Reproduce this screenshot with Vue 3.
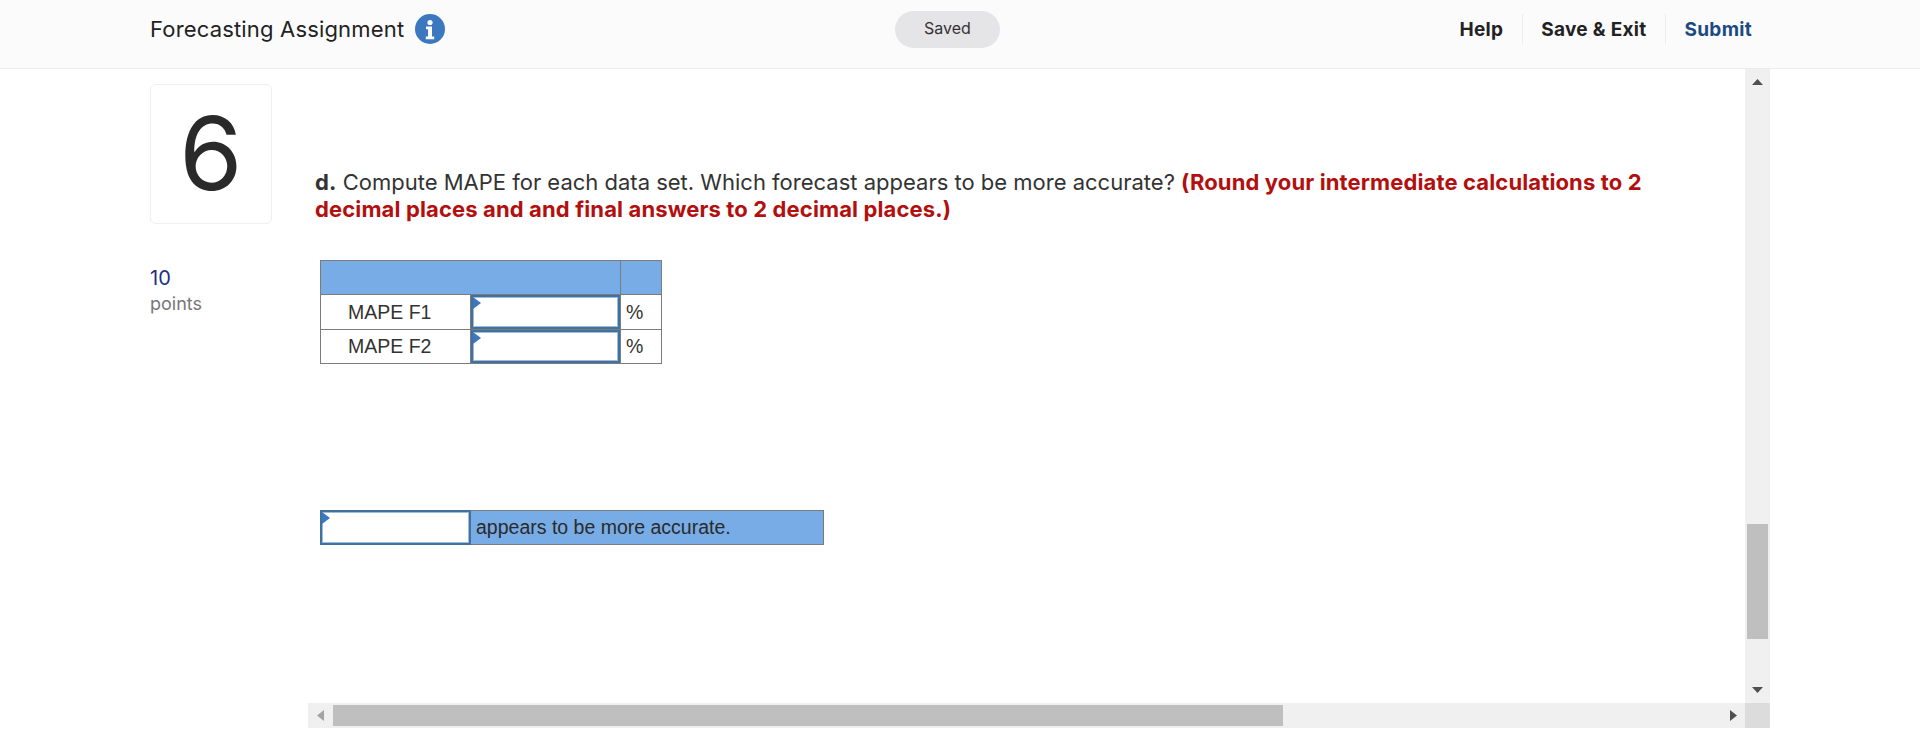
<template>
  <div class="page">
    <header class="top-bar">
      <div class="title-wrap">
        <h1 class="title">Forecasting Assignment</h1>
        <svg class="info-icon" width="30" height="30" viewBox="0 0 30 30">
          <circle cx="15" cy="15" r="15" fill="#3b78c0" />
          <circle cx="15" cy="8.5" r="2.6" fill="#fff" />
          <path d="M11 12.5h6v10h2.2v2.8h-8.4v-2.8H13v-7.2h-2z" fill="#fff" />
        </svg>
      </div>
      <span class="saved">Saved</span>
      <nav class="actions">
        <a class="action">Help</a>
        <a class="action">Save &amp; Exit</a>
        <a class="action submit">Submit</a>
      </nav>
    </header>

    <main class="main">
      <aside class="side">
        <div class="num-card">6</div>
        <div class="points-val">10</div>
        <div class="points-label">points</div>
      </aside>

      <section class="pane">
        <div class="content">
          <p class="question">
            <b>d.</b> Compute MAPE for each data set. Which forecast appears to be more accurate?
            <b class="hint">(Round your intermediate calculations to 2 decimal places and and final answers to 2 decimal places.)</b>
          </p>

          <table class="grid-table">
            <tbody>
              <tr class="head-row">
                <td colspan="2"></td>
                <td class="unit-col"></td>
              </tr>
              <tr v-for="row in rows" :key="row">
                <td class="label-col">{{ row }}</td>
                <td class="input-col"><div class="answer"></div></td>
                <td class="unit-col">%</td>
              </tr>
            </tbody>
          </table>

          <div class="accurate">
            <div class="answer accurate-input"></div>
            <div class="accurate-text">appears to be more accurate.</div>
          </div>
        </div>

        <div class="v-scroll">
          <svg class="arrow-up" width="11" height="6" viewBox="0 0 11 6"><path d="M5.5 0l5.5 6H0z" fill="#505050" /></svg>
          <div class="v-thumb"></div>
          <svg class="arrow-down" width="11" height="6" viewBox="0 0 11 6"><path d="M0 0h11L5.5 6z" fill="#505050" /></svg>
        </div>
        <div class="h-scroll">
          <svg class="arrow-left" width="7" height="11" viewBox="0 0 7 11"><path d="M7 0v11L0 5.5z" fill="#a3a3a3" /></svg>
          <div class="h-thumb"></div>
          <svg class="arrow-right" width="7" height="11" viewBox="0 0 7 11"><path d="M0 0l7 5.5L0 11z" fill="#505050" /></svg>
        </div>
        <div class="corner"></div>
      </section>
    </main>
  </div>
</template>

<script setup>
const rows = ['MAPE F1', 'MAPE F2']
</script>

<style>
html, body {
  margin: 0;
  background: #fff;
}
</style>

<style scoped>
.page {
  font-family: Inter, "Open Sans", sans-serif;
  color: #222;
  height: 749px;
  overflow: hidden;
}

.top-bar {
  display: grid;
  grid-template-columns: 745px 105px 1fr;
  align-items: center;
  box-sizing: border-box;
  height: 69px;
  padding: 0 168px 10px 150px;
  background: #fbfbfb;
  border-bottom: 1px solid #ececec;
}

.title-wrap {
  display: flex;
  align-items: center;
  gap: 11px;
}

.title {
  margin: 0;
  font-size: 22px;
  font-weight: 400;
  letter-spacing: 0.17px;
  color: #222;
}

.saved {
  height: 37px;
  line-height: 35px;
  border-radius: 19px;
  background: #e5e4e7;
  text-align: center;
  font-size: 16px;
  color: #333;
}

.actions {
  display: flex;
  justify-content: flex-end;
  align-items: center;
}

.action {
  height: 30px;
  line-height: 32px;
  padding: 0 18.5px;
  font-size: 19px;
  font-weight: 700;
  letter-spacing: 0.3px;
  border-left: 1px solid #ececec;
}

.action:first-child {
  border-left: none;
}

.action.submit {
  color: #1b4a82;
  padding-right: 0;
}

.main {
  display: flex;
  padding-left: 150px;
}

.side {
  width: 158px;
  flex-shrink: 0;
  padding-top: 15px;
}

.num-card {
  box-sizing: border-box;
  width: 122px;
  height: 140px;
  border: 1px solid #efefef;
  border-radius: 6px;
  text-align: center;
  font-size: 102px;
  font-weight: 400;
  line-height: 136px;
  color: #2a2a2a;
}

.points-val {
  margin-top: 41px;
  font-size: 20px;
  line-height: 26px;
  color: #1d2f7f;
}

.points-label {
  font-size: 18px;
  line-height: 26px;
  color: #777;
}

.pane {
  display: grid;
  grid-template-columns: 1437px 25px;
  grid-template-rows: 634px 25px;
  width: 1462px;
}

.content {
  padding: 100px 0 0 7px;
  overflow: hidden;
}

.question {
  margin: 0;
  width: 1340px;
  font-size: 22px;
  line-height: 27px;
  color: #333;
}

.question b {
  font-weight: 700;
  letter-spacing: 0.13px;
}

.question .hint {
  color: #b30f0f;
}

.grid-table {
  margin: 37px 0 0 5px;
  border-collapse: collapse;
  font-family: "Liberation Sans", Arial, sans-serif;
  font-size: 19.5px;
  color: #333;
}

.grid-table td {
  box-sizing: border-box;
  height: 35px;
  padding: 0;
  border: 1px solid #7c7c7c;
}

.grid-table tr:last-child td {
  height: 34px;
}

.grid-table tr:last-child .answer {
  height: 33px;
}

.head-row td {
  background: #78ace6;
  height: 34px;
}

.label-col {
  width: 150px;
  text-align: left;
  padding-left: 27px !important;
}

.input-col {
  width: 150px;
  position: relative;
}

.unit-col {
  width: 41px;
  padding-left: 5px !important;
}

.answer {
  position: relative;
  box-sizing: border-box;
  width: 100%;
  height: 34px;
  background: #fff;
  border: 2px solid #41719f;
  box-shadow: inset 0 0 0 1px #9dbbdd;
}

.answer::before {
  content: "";
  position: absolute;
  left: 0;
  top: 0;
  border-left: 8px solid #3b78c0;
  border-top: 6px solid transparent;
  border-bottom: 6px solid transparent;
}

.accurate {
  display: flex;
  width: 504px;
  height: 35px;
  margin: 146px 0 0 5px;
  font-family: "Liberation Sans", Arial, sans-serif;
  font-size: 19.5px;
  color: #2a2a2a;
}

.accurate-input {
  flex: 0 0 151px;
  height: 35px;
}

.accurate-text {
  flex: 1;
  box-sizing: border-box;
  padding-left: 5px;
  line-height: 33px;
  background: #78ace6;
  border: 1px solid #7c7c7c;
  border-left: none;
}

.v-scroll {
  display: flex;
  flex-direction: column;
  align-items: center;
  background: #f0f0f0;
}

.arrow-up {
  margin-top: 10px;
}

.v-thumb {
  width: 21px;
  height: 115px;
  margin-top: 439px;
  background: #bfbfbf;
}

.arrow-down {
  margin-top: 48px;
}

.h-scroll {
  display: flex;
  align-items: center;
  background: #f0f0f0;
}

.arrow-left {
  margin-left: 9px;
}

.h-thumb {
  width: 950px;
  height: 21px;
  margin-left: 9px;
  background: #bfbfbf;
}

.arrow-right {
  margin-left: 447px;
}

.corner {
  background: #dcdcdc;
}
</style>
